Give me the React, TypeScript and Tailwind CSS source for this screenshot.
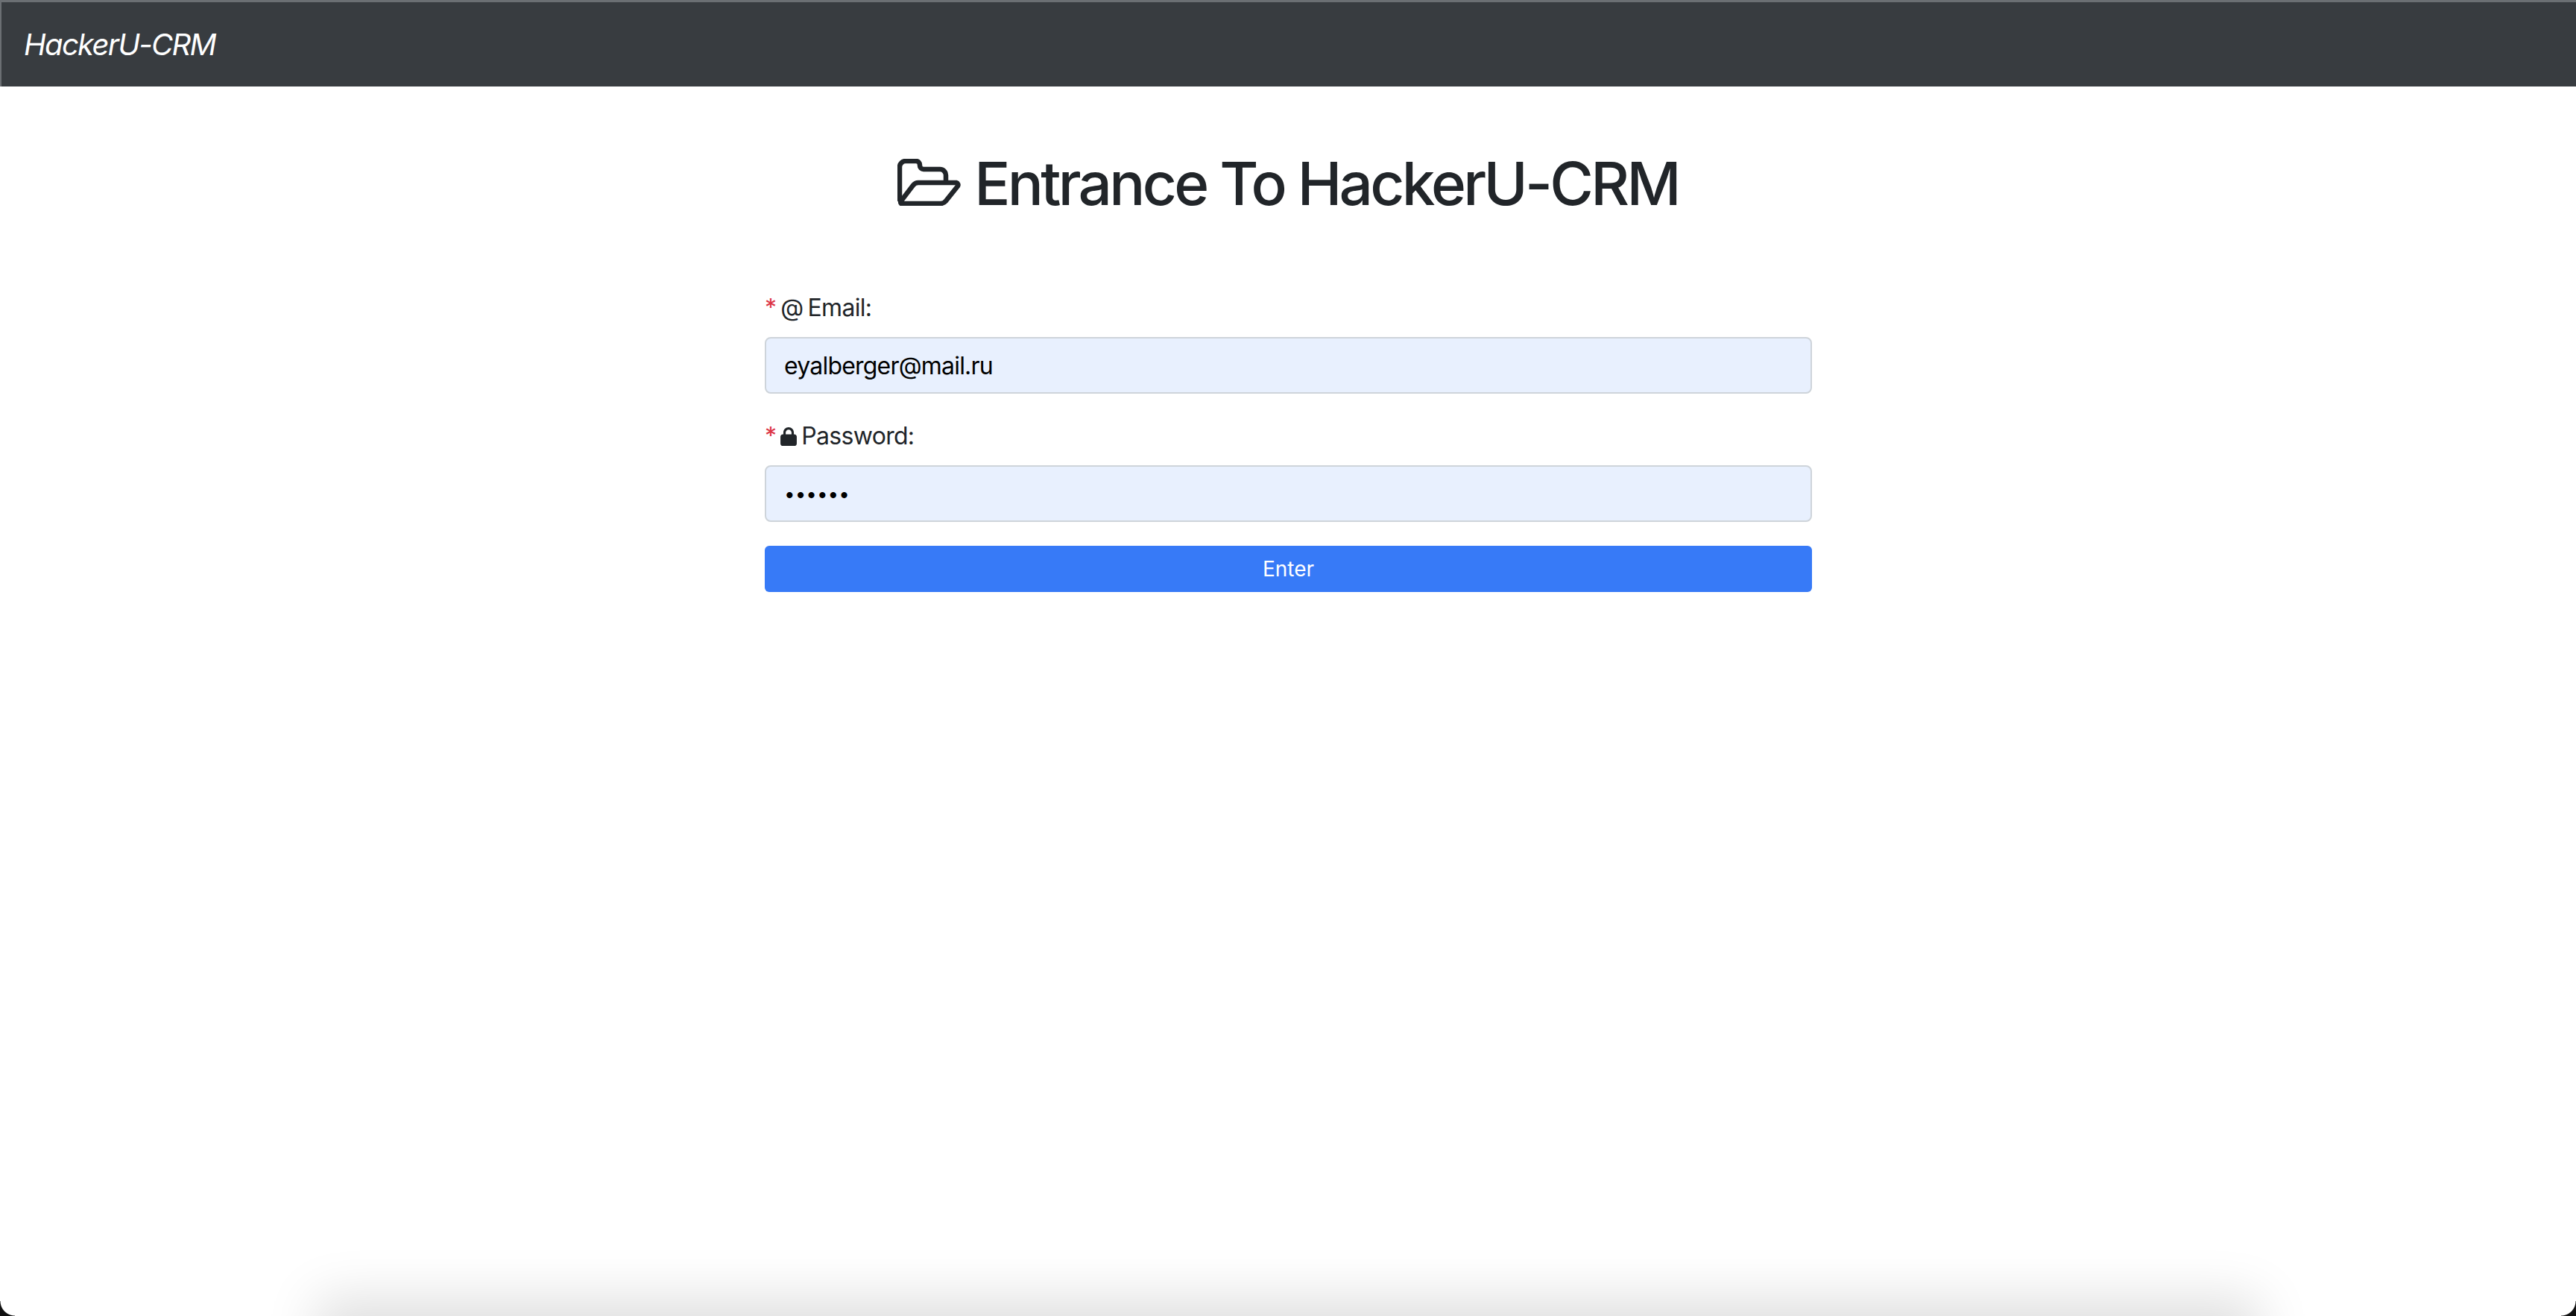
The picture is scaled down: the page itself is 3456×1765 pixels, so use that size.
import React from 'react';
import { FaLock } from 'react-icons/fa6';

const font = "font-['Inter','Liberation_Sans',sans-serif]";

// the outlined open folder of the heading
function FolderOpen() {
  return (
    <svg viewBox="0 0 85 63" fill="none" stroke="currentColor" strokeWidth="6.5" strokeLinejoin="round" strokeLinecap="round" className="w-[85px] h-[63px] mb-[4px] shrink-0">
      <path d="M3 55V11a8 8 0 0 1 8-8h14a5 5 0 0 1 5 5v1a5 5 0 0 0 5 5h22a8 8 0 0 1 8 8v8" />
      <path d="M8 60h50a9 9 0 0 0 7-3.500L81 36.500a3 3 0 0 0-2-4.500H28a9 9 0 0 0-7 3.500L5 56.500a2 2 0 0 0 3 3.500z" />
    </svg>
  );
}

function Field({ label, icon, children }: { label: string; icon: React.ReactNode; children: React.ReactNode }) {
  return (
    <div className="mb-[32px]">
      <label className="flex items-center h-[50px] mb-[14px] text-[32px] tracking-[-0.7px] text-[#212529]">
        <span className="text-[#dc3545] mr-[6px]">*</span>
        {icon}
        <span className="ml-[6px]">{label}</span>
      </label>
      {children}
    </div>
  );
}

const inputClass = `block w-full h-[76px] px-[24px] text-black bg-[#e8f0fe] border-2 border-[#ced4da] rounded-[8px] outline-none ${font}`;

export default function App() {
  return (
    <div className={`relative h-[1765px] overflow-hidden bg-white ${font}`}>
      <nav className="flex items-center h-[116px] pl-[30px] bg-[#383c40] border-t-[3px] border-l-2 border-[#6b6f73]">
        <span className="text-[40px] italic tracking-[-1.7px] text-white">HackerU-CRM</span>
      </nav>

      <h1 className="flex items-center justify-center gap-[18px] mt-[82px] h-[96px] text-[80px] font-medium text-[#212529] tracking-[-3.7px]">
        <FolderOpen />
        Entrance To HackerU-CRM
      </h1>

      <form className="w-[1405px] ml-[1026px] mt-[94px]">
        <Field label="Email:" icon={<span>@</span>}>
          <input type="email" defaultValue="eyalberger@mail.ru" readOnly className={`${inputClass} text-[32px] tracking-[-0.8px]`} />
        </Field>
        <Field label="Password:" icon={<FaLock className="w-[22px] h-[25px] shrink-0" />}>
          <input type="password" defaultValue="123456" readOnly className={`${inputClass} text-[26px]`} />
        </Field>
        <button type="button" className="block w-full h-[62px] text-[28px] text-white bg-[#377af7] rounded-[6px]">
          Enter
        </button>
      </form>

      {/* shadow of the window underneath */}
      <div className="absolute left-[455px] right-[455px] bottom-[-66px] h-[60px] shadow-[0_0_70px_30px_rgba(0,0,0,0.13)]" />
      <div className="absolute left-0 bottom-0 w-[20px] h-[20px] bg-[radial-gradient(circle_at_100%_0,transparent_19px,#111_20px)]" />
      <div className="absolute right-0 bottom-0 w-[20px] h-[20px] bg-[radial-gradient(circle_at_0_0,transparent_19px,#111_20px)]" />
    </div>
  );
}
